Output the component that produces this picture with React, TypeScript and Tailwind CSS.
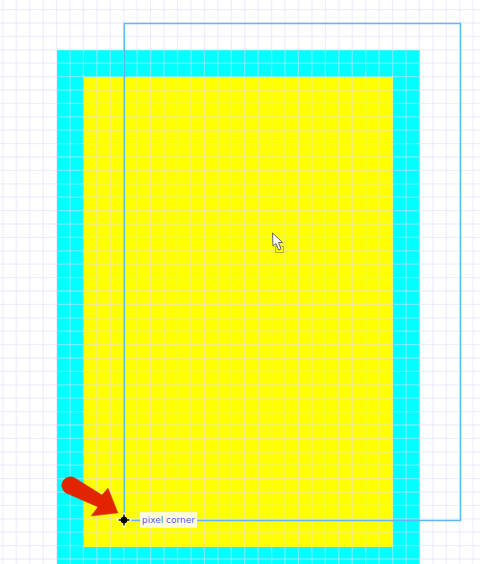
const vs = Array.from({ length: 36 }, (_, i) => 2.8 + i * 13.44);
const hs = Array.from({ length: 42 }, (_, i) => 9.6 + i * 13.4);

export default function App() {
  return (
    <div className="relative w-[480px] h-[564px] overflow-hidden bg-white font-['DejaVu_Sans',sans-serif]">
      <div className="ml-[57px] mt-[50px] w-[363px] h-[514px] bg-[#00ffff] pl-[27px] pt-[27px]">
        <div className="w-[309px] h-[470px] bg-[#ffff00]" />
      </div>
      <svg className="absolute inset-0" width="480" height="564" viewBox="0 0 480 564">
        {vs.map((x) => (
          <line key={x} x1={x} x2={x} y1={0} y2={564} stroke="#e0dcfa" strokeOpacity="0.48" strokeWidth="1.3" />
        ))}
        {hs.map((y) => (
          <line key={y} x1={0} x2={480} y1={y} y2={y} stroke="#e0dcfa" strokeOpacity="0.48" strokeWidth="1.3" />
        ))}
        <path d="M124.300 520.500 V23.500 H460.500 V520.500 Z" fill="none" stroke="#62b6f6" strokeWidth="1.5" />
        <path d="M75 478 L102 495 L108 488 L118 513 L91 516 L98 507 L66 493 A8.300 8.300 0 0 1 75 478 Z" fill="#e32400" stroke="#c04a00" strokeWidth="0.5" />
        <g stroke="#fff" strokeWidth="3" strokeLinecap="round" opacity="0.8">
          <line x1="118" x2="130" y1="520" y2="520" />
          <line x1="124" x2="124" y1="514" y2="526" />
        </g>
        <circle cx="124" cy="520" r="3.300" fill="#000" />
        <g stroke="#000" strokeWidth="1.400">
          <line x1="118.500" x2="129.500" y1="520" y2="520" />
          <line x1="124" x2="124" y1="514.500" y2="525.500" />
        </g>
        <path d="M275.500 246.500 H283.500 V252.500 H275.500 Z" fill="#ffff00" stroke="#666" strokeDasharray="1 1" />
        <path d="M272.500 233 L273 246 L276 243.500 L278.500 250 L281 249 L278.500 242.500 L282.500 242.500 Z" fill="#fff" stroke="#666" strokeWidth="1" />
      </svg>
      <div className="absolute left-[140px] top-[512px] h-[16px] w-[57px] bg-[#ffffd8] text-[9px] leading-[16px] text-center text-[#4a5cf0]">pixel corner</div>
    </div>
  );
}
